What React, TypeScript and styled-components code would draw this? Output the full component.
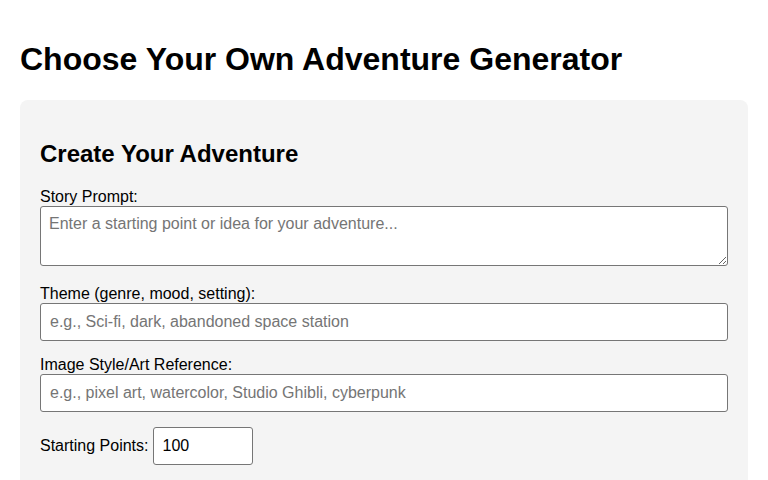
import React from "react";
import styled, { createGlobalStyle } from "styled-components";

const Global = createGlobalStyle`
  html, body { margin: 0; padding: 0; background: #fff; }
  body { font-family: "Liberation Sans", Arial, sans-serif; color: #000; }
  * { box-sizing: border-box; }
`;

const Page = styled.div`
  padding: 20px;
`;

const Title = styled.h1`
  font-size: 32px;
  font-weight: bold;
  margin: 21.44px 0;
  line-height: normal;
`;

const Panel = styled.div`
  background: #f4f4f4;
  border-radius: 8px;
  padding: 20px;
`;

const Subtitle = styled.h2`
  font-size: 24px;
  font-weight: bold;
  margin: 19.92px 0;
  line-height: normal;
`;

const Group = styled.div<{ $extra?: number }>`
  display: flex;
  flex-direction: column;
  margin-bottom: ${(p) => 15 + (p.$extra ?? 0)}px;
`;

const Label = styled.label`
  font-size: 16px;
  line-height: normal;
  display: block;
`;

const fieldBase = `
  font-family: "Liberation Sans", Arial, sans-serif;
  font-size: 16px;
  color: #000;
  background: #fff;
  border: 1px solid #767676;
  border-radius: 3px;
  outline: none;
  &::placeholder { color: #757575; }
`;

const TextArea = styled.textarea`
  ${fieldBase}
  display: block;
  width: 100%;
  height: 60px;
  padding: 8px;
  resize: vertical;
`;

const Input = styled.input<{ $width?: number }>`
  ${fieldBase}
  display: block;
  width: ${(p) => (p.$width ? `${p.$width}px` : "100%")};
  height: 38px;
  padding: 0 9px;
`;

const Row = styled.div`
  display: flex;
  align-items: center;
  gap: 4px;
`;

export default function App() {
  return (
    <>
      <Global />
      <Page>
        <Title>Choose Your Own Adventure Generator</Title>
        <Panel>
          <Subtitle>Create Your Adventure</Subtitle>
          <Group $extra={4}>
            <Label>Story Prompt:</Label>
            <TextArea placeholder="Enter a starting point or idea for your adventure..." />
          </Group>
          <Group>
            <Label>Theme (genre, mood, setting):</Label>
            <Input placeholder="e.g., Sci-fi, dark, abandoned space station" />
          </Group>
          <Group>
            <Label>Image Style/Art Reference:</Label>
            <Input placeholder="e.g., pixel art, watercolor, Studio Ghibli, cyberpunk" />
          </Group>
          <Group>
            <Row>
              <Label>Starting Points:</Label>
              <Input type="number" $width={100} defaultValue={100} />
            </Row>
          </Group>
        </Panel>
      </Page>
    </>
  );
}
